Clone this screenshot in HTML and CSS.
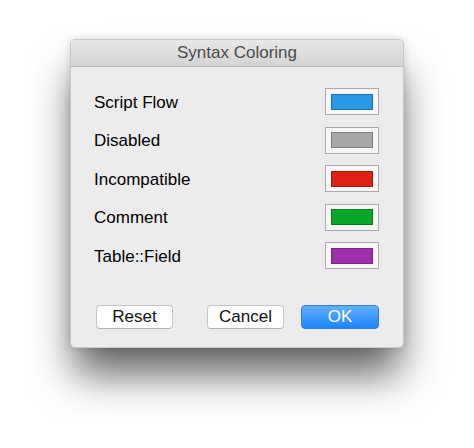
FILE: index.html
```html
<!DOCTYPE html>
<html>
<head>
<meta charset="utf-8">
<link rel="stylesheet" href="styles.css">
</head>
<body>
<div class="dialog">
  <div class="titlebar">Syntax Coloring</div>
  <div class="content">
    <div class="rows">
      <div class="row"><span class="label">Script Flow</span><span class="well"><span class="swatch blue"></span></span></div>
      <div class="row"><span class="label">Disabled</span><span class="well"><span class="swatch gray"></span></span></div>
      <div class="row"><span class="label">Incompatible</span><span class="well"><span class="swatch red"></span></span></div>
      <div class="row"><span class="label">Comment</span><span class="well"><span class="swatch green"></span></span></div>
      <div class="row"><span class="label">Table::Field</span><span class="well"><span class="swatch purple"></span></span></div>
    </div>
    <div class="buttons">
      <button class="btn">Reset</button>
      <div class="right">
        <button class="btn">Cancel</button>
        <button class="btn primary">OK</button>
      </div>
    </div>
  </div>
</div>
</body>
</html>
```
FILE: styles.css
```css
html, body {
  margin: 0;
  padding: 0;
  background: #ffffff;
}
body {
  font-family: "Liberation Sans", Arial, sans-serif;
  box-sizing: border-box;
  height: 448px;
  padding-top: 39px;
  padding-left: 70px;
  overflow: hidden;
}
.dialog {
  width: 334px;
  height: 309px;
  box-sizing: border-box;
  border: 1px solid #c9c9c9;
  border-radius: 5px;
  background: #ececec;
  box-shadow: 0 30px 42px -4px rgba(0, 0, 0, 0.62), 0 0 8px rgba(0, 0, 0, 0.14);
  display: flex;
  flex-direction: column;
  overflow: hidden;
}
.titlebar {
  height: 26px;
  border-bottom: 1px solid #b9b9b9;
  background: linear-gradient(#e9e8e9, #d4d4d4);
  color: #4b4b4b;
  font-size: 17px;
  line-height: 26px;
  text-align: center;
}
.content {
  flex: 1;
  display: flex;
  flex-direction: column;
  padding: 21px 24px 18px 23px;
}
.rows {
  display: flex;
  flex-direction: column;
  gap: 11.6px;
}
.row {
  display: flex;
  align-items: center;
  justify-content: space-between;
  height: 27px;
}
.label {
  font-size: 17px;
  color: #000;
  padding-top: 2px;
}
.well {
  width: 54px;
  height: 27px;
  box-sizing: border-box;
  border: 1px solid #a9a9a9;
  background: #f7f7f7;
  display: flex;
  align-items: center;
  justify-content: center;
}
.swatch {
  width: 42px;
  height: 16px;
  box-sizing: border-box;
  border: 1px solid rgba(0, 0, 0, 0.25);
}
.blue { background: #2b98e6; }
.gray { background: #a8a8a8; }
.red { background: #de2115; }
.green { background: #0aa62a; }
.purple { background: #a22eab; }
.buttons {
  margin-top: auto;
  display: flex;
  justify-content: space-between;
  align-items: center;
  padding-left: 2px;
  padding-right: 0;
}
.right {
  display: flex;
  gap: 17px;
}
.btn {
  font-family: "Liberation Sans", Arial, sans-serif;
  font-size: 17px;
  color: #111;
  height: 24px;
  width: 77px;
  padding: 0;
  background: #ffffff;
  border: 1px solid #c6c6c6;
  border-bottom-color: #b3b3b3;
  border-radius: 4px;
  line-height: 22px;
}
.primary {
  width: 78px;
  color: #ffffff;
  border-color: #2a7fe6;
  background: linear-gradient(#64b1fb, #1c82fb);
}
```
